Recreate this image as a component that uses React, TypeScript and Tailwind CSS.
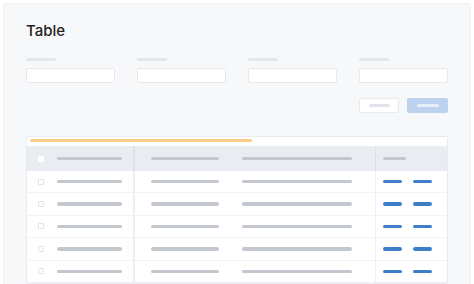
const filters = ['a', 'b', 'c', 'd']
const rows = [0, 1, 2, 3, 4]

function Bar({ w, color = 'bg-[#c3c7ce]' }: { w: string; color?: string }) {
  return <div className={`h-[3.5px] rounded-full ${w} ${color}`} />
}

export default function App() {
  return (
    <div className="h-[284px] w-[474px] overflow-hidden bg-white pl-[3px] pr-[3px] pt-[3px]" style={{ fontFamily: 'Inter, "Liberation Sans", sans-serif' }}>
      <div className="h-full rounded-tl-[3px] rounded-tr-[3px] border border-b-0 border-[#f0f1f4] bg-[#f7f8fa] px-[22px] pt-[17px]">
        {/* Header */}
        <h1 className="text-[15px] leading-[20px] font-medium text-[#222]">Table</h1>

        {/* Filters */}
        <div className="mt-[17px] grid grid-cols-4 gap-[22px]">
          {filters.map((f) => (
            <div key={f} className="flex flex-col gap-[7px]">
              <div className="h-[3px] w-[30px] rounded-full bg-[#e4e6ea]" />
              <div className="h-[15px] rounded-[2px] border border-[#e6e8ec] bg-white" />
            </div>
          ))}
        </div>

        {/* Actions */}
        <div className="mt-[15px] flex justify-end gap-[8px]">
          <div className="flex h-[15px] w-[40px] items-center justify-center rounded-[2px] border border-[#e8eaee] bg-white">
            <div className="h-[3px] w-[21px] rounded-full bg-[#e1e4e9]" />
          </div>
          <div className="flex h-[15px] w-[41px] items-center justify-center rounded-[2px] bg-[#bcd2ee]">
            <div className="h-[3px] w-[22px] rounded-full bg-[#e6eefa]" />
          </div>
        </div>

        {/* Table */}
        <div className="mt-[23px] rounded-[2px] border border-[#e8eaee] bg-white">
          <div className="px-[3px] pt-[2px] pb-[4px]">
            <div className="h-[3px] w-[222px] rounded-full bg-[#f8cf88]" />
          </div>
          <div className="grid h-[25px] grid-cols-[108px_241px_1fr] bg-[#e9ecf0]">
            <div className="flex items-center gap-[13px] border-r-2 border-[#dde0e5] pl-[11px]">
              <div className="h-[6px] w-[6px] rounded-[1px] bg-white" />
              <Bar w="w-[65px]" />
            </div>
            <div className="flex items-center gap-[23px] border-r border-[#dde0e5] pl-[16px]">
              <Bar w="w-[68px]" />
              <Bar w="w-[110px]" />
            </div>
            <div className="flex items-center pl-[7px]">
              <Bar w="w-[23px]" />
            </div>
          </div>
          {rows.map((r) => (
            <div key={r} className="grid h-[22.4px] grid-cols-[108px_241px_1fr] border-b border-[#f1f2f4]">
              <div className="flex items-center gap-[13px] border-r-2 border-[#eceef1] pl-[11px]">
                <div className="h-[6px] w-[6px] rounded-[1px] border border-[#e0e3e7] bg-white" />
                <Bar w="w-[65px]" />
              </div>
              <div className="flex items-center gap-[23px] border-r border-[#eceef1] pl-[16px]">
                <Bar w="w-[68px]" />
                <Bar w="w-[110px]" />
              </div>
              <div className="flex items-center gap-[11px] pl-[7px]">
                <Bar w="w-[19px]" color="bg-[#3c7fc7]" />
                <Bar w="w-[19px]" color="bg-[#3c7fc7]" />
              </div>
            </div>
          ))}
        </div>
      </div>
    </div>
  )
}
